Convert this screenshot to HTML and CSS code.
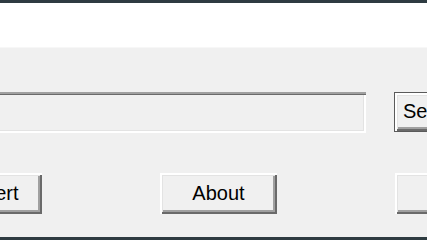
FILE: index.html
```html
<!DOCTYPE html>
<html>
<head>
<meta charset="utf-8">
<link rel="stylesheet" href="styles.css">
</head>
<body>
<div class="window">
  <div class="topbar"></div>
  <div class="header"></div>
  <div class="path-row">
    <div class="path-field"></div>
    <button class="btn btn-default btn-select">Select</button>
  </div>
  <div class="action-row">
    <button class="btn">Convert</button>
    <button class="btn">About</button>
    <button class="btn">Exit</button>
  </div>
  <div class="bottombar"></div>
</div>
</body>
</html>
```
FILE: styles.css
```css
html, body {
  margin: 0;
  padding: 0;
  background: #f0f0f0;
}
.window {
  width: 427px;
  height: 240px;
  overflow: hidden;
  display: flex;
  flex-direction: column;
  background: #f0f0f0;
  font-family: "Liberation Sans", Arial, sans-serif;
}
.topbar {
  height: 3px;
  flex: none;
  background: #2e3b41;
}
.header {
  height: 45px;
  flex: none;
  background: #ffffff;
  border-bottom: 1px solid #f7f7f7;
  box-sizing: border-box;
}
.path-row {
  display: flex;
  align-items: flex-start;
  gap: 28px;
  margin-top: 44px;
  margin-left: -200px;
  flex: none;
}
.path-field {
  width: 566px;
  height: 41px;
  flex: none;
  box-sizing: border-box;
  background: #f0f0f0;
  box-shadow:
    inset 0 2px 0 #a0a0a0,
    inset 0 3px 0 #6a6a6a,
    inset -2px -2px 0 #ffffff,
    inset -3px -3px 0 #e3e3e3;
}
.btn {
  width: 117px;
  height: 41px;
  flex: none;
  box-sizing: border-box;
  border: none;
  margin: 0;
  padding: 0 0 2px 0;
  background: #f0f0f0;
  color: #000;
  font-family: "Liberation Sans", Arial, sans-serif;
  font-size: 20px;
  line-height: 20px;
  text-align: center;
  white-space: nowrap;
  overflow: hidden;
  box-shadow:
    inset 2px 2px 0 #ffffff,
    inset -2px -2px 0 #6a6a6a,
    inset 3px 3px 0 #e3e3e3,
    inset -4px -4px 0 #a0a0a0;
}
.btn-select {
  width: 75px;
  height: 40px;
  text-align: left;
  padding-left: 9px;
}
.btn-default {
  box-shadow:
    inset 0 0 0 1px #5a5a5a,
    inset 2px 2px 0 1px #ffffff,
    inset -2px -2px 0 1px #6a6a6a,
    inset 3px 3px 0 1px #e3e3e3,
    inset -4px -4px 0 1px #a0a0a0;
}
.action-row {
  display: flex;
  gap: 118px;
  margin-top: 40px;
  margin-left: -75px;
  flex: none;
}
.bottombar {
  margin-top: auto;
  height: 3px;
  flex: none;
  background: #2e3b41;
}
```
